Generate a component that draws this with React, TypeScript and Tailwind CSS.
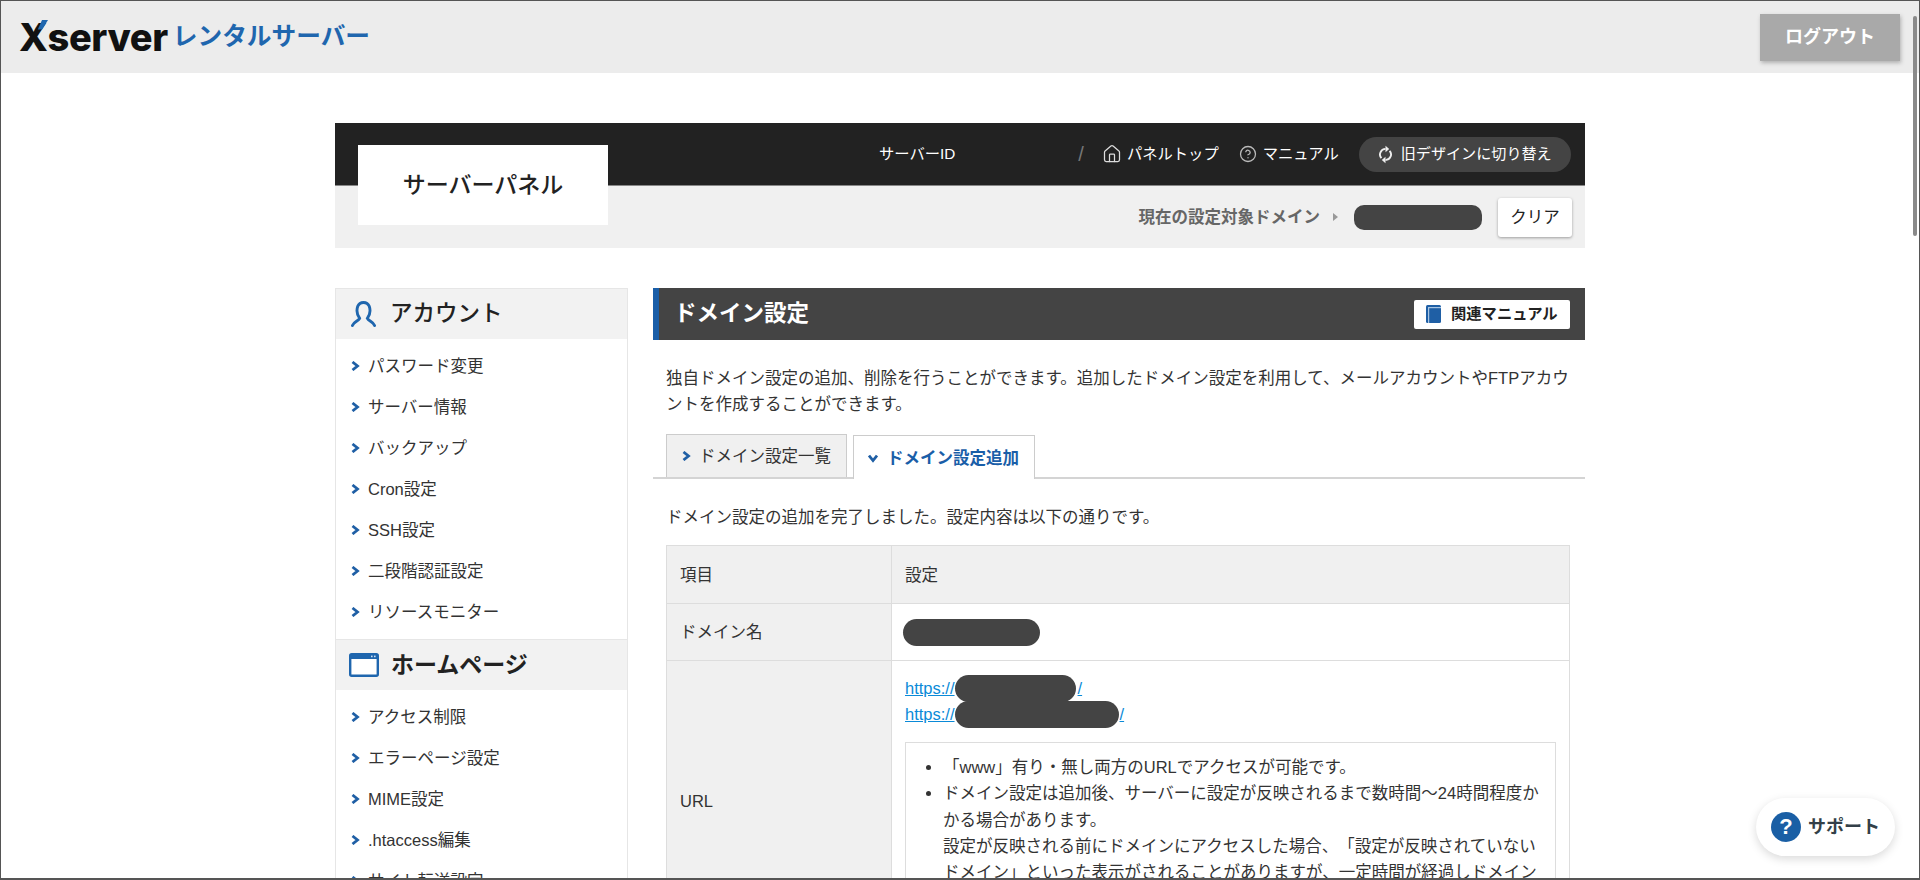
import { CircleHelp, House } from "lucide-react";

const accountMenu = [
  "パスワード変更",
  "サーバー情報",
  "バックアップ",
  "Cron設定",
  "SSH設定",
  "二段階認証設定",
  "リソースモニター",
];

const homepageMenu = [
  "アクセス制限",
  "エラーページ設定",
  "MIME設定",
  ".htaccess編集",
  "サイト転送設定",
];

const Chevron = ({ down = false }: { down?: boolean }) => (
  <svg
    viewBox="0 0 10 10"
    className={down ? "w-[10px] h-[10px] rotate-90 shrink-0" : "w-[10px] h-[10px] shrink-0"}
  >
    <path d="M2.5 1 L7.5 5 L2.5 9" fill="none" stroke="#1f5fa5" strokeWidth="2.8" />
  </svg>
);

const Redact = ({ className }: { className: string }) => (
  <div className={`bg-[#444] ${className}`} />
);

const SideMenu = ({ items, className }: { items: string[]; className: string }) => (
  <ul className={className}>
    {items.map((item) => (
      <li key={item} className="flex items-center h-[41px] pl-[14px] gap-[8px] text-[#333]">
        <Chevron />
        <span>{item}</span>
      </li>
    ))}
  </ul>
);

const App = () => {
  return (
    <div className="relative h-[880px] overflow-hidden bg-white border border-[#555] border-b-2 font-['Liberation_Sans','Noto_Sans_CJK_JP',sans-serif] text-[16.5px] leading-[26px] text-[#333] [text-spacing-trim:space-all]">
      {/* ヘッダー */}
      <header className="flex items-center justify-between h-[72px] bg-[#ececec] pl-[18px] pr-[19px]">
        <div className="flex items-center gap-[5px]">
          <div className="relative font-['Inter',sans-serif] font-extrabold text-[38px] leading-none tracking-[-0.4px] text-[#111]">
            Xserver
            <svg viewBox="0 0 10 10" className="absolute left-[17px] top-[2px] w-[12px] h-[12px]">
              <path d="M5 0 L10 0 L5 8 L1.5 8 Z" fill="#1f66ae" />
            </svg>
          </div>
          <div className="text-[24.7px] leading-none font-bold text-[#1f66ae]">レンタルサーバー</div>
        </div>
        <button className="w-[140px] h-[47px] bg-[#a9a9a9] text-white text-[18px] font-bold shadow-[1px_2px_4px_rgba(0,0,0,0.25)]">
          ログアウト
        </button>
      </header>

      <div className="w-[1250px] ml-[334px] mt-[50px]">
        {/* サーバーパネル */}
        <div className="relative">
          <div className="absolute left-[23px] top-[22px] flex items-center justify-center w-[250px] h-[80px] bg-white text-[23px] font-medium text-[#222]">
            サーバーパネル
          </div>
          <div className="flex items-center h-[63px] bg-[#222] border-b border-[#888] text-[15.3px] text-white">
            <span className="ml-[544px]">サーバーID</span>
            <span className="ml-[123px] text-[#777] text-[20px]">/</span>
            <House className="w-[20px] h-[20px] ml-[18px] text-[#ddd]" strokeWidth={1.5} />
            <span className="ml-[5px]">パネルトップ</span>
            <CircleHelp className="w-[18px] h-[18px] ml-[20px] text-[#bbb]" strokeWidth={1.7} />
            <span className="ml-[6px]">マニュアル</span>
            <div className="flex items-center h-[35px] ml-[20px] pl-[20px] pr-[19px] gap-[9px] rounded-full bg-[#444]">
              <svg viewBox="0 0 14 20" className="w-[13px] h-[19px]">
                <path d="M7 4A6 6 0 0 0 2.6 14" fill="none" stroke="#eee" strokeWidth="2" />
                <path d="M7 0.5 V7.5 L11 4 Z" fill="#eee" />
                <path d="M7 16A6 6 0 0 0 11.4 6" fill="none" stroke="#eee" strokeWidth="2" />
                <path d="M7 19.5 V12.5 L3 16 Z" fill="#eee" />
              </svg>
              <span className="text-[15.1px]">旧デザインに切り替え</span>
            </div>
          </div>
          <div className="flex items-center justify-end h-[62px] bg-[#f0f0f0] pr-[13px]">
            <span className="font-bold text-[#666]">現在の設定対象ドメイン</span>
            <span className="ml-[13px] w-0 h-0 border-y-[4px] border-y-transparent border-l-[5px] border-l-[#999]" />
            <Redact className="w-[128px] h-[25px] ml-[16px] rounded-[10px]" />
            <button className="w-[74px] h-[39px] ml-[16px] bg-white rounded-[3px] text-[#222] shadow-[0_1px_3px_rgba(0,0,0,0.35)]">
              クリア
            </button>
          </div>
        </div>

        <div className="flex gap-[25px] mt-[40px] items-start">
          {/* サイドメニュー */}
          <aside className="w-[293px] shrink-0 border-x border-[#e6e6e6]">
            <div className="flex items-center h-[51px] pl-[15px] gap-[14px] bg-[#f2f2f2] border-t border-[#e6e6e6]">
              <svg viewBox="0 0 26 28" fill="none" className="w-[25px] h-[28px]">
                <path
                  d="M9 18.5C6 14.5 6 9 7 6C8.2 3 10.7 2 13 2C15.3 2 17.8 3 19 6C20 9 20 14.5 17 18.5C18.5 21.5 23 22 24.5 26M9 18.5C7.5 21.5 3 22 1.5 26"
                  stroke="#1f66ae"
                  strokeWidth="3"
                  strokeLinecap="round"
                />
              </svg>
              <span className="text-[22.5px] font-medium text-[#222]">アカウント</span>
            </div>
            <SideMenu items={accountMenu} className="pt-[6px] pb-[7px]" />
            <div className="flex items-center h-[51px] pl-[13px] gap-[12px] bg-[#f2f2f2] border-t border-[#e6e6e6]">
              <svg viewBox="0 0 30 24" className="w-[30px] h-[24px]">
                <rect x="1.2" y="1.2" width="27.6" height="21.6" rx="1.5" fill="#fff" stroke="#1f66ae" strokeWidth="2.4" />
                <rect x="1" y="1" width="28" height="5" fill="#1f66ae" />
                <rect x="22" y="2.6" width="1.6" height="1.6" fill="#cfe0f2" />
                <rect x="25" y="2.6" width="1.6" height="1.6" fill="#cfe0f2" />
              </svg>
              <span className="text-[23px] font-bold text-[#222]">ホームページ</span>
            </div>
            <SideMenu items={homepageMenu} className="pt-[6px]" />
          </aside>

          {/* メイン */}
          <main className="flex-1 min-w-0">
            <div className="flex items-center justify-between h-[52px] bg-[#444] border-l-[6px] border-[#1a5ea8] pl-[15px] pr-[15px]">
              <h1 className="text-[22.5px] font-bold text-white">ドメイン設定</h1>
              <div className="flex items-center h-[29px] w-[156px] pl-[12px] gap-[10px] bg-white rounded-[2px] text-[15.3px] font-bold text-[#222]">
                <svg viewBox="0 0 15 18" className="w-[15px] h-[18px]">
                  <rect x="0" y="0" width="15" height="18" rx="1.5" fill="#1f5fa5" />
                  <rect x="2" y="2" width="13" height="1.2" fill="#a9c6e4" />
                  <rect x="2" y="2" width="1.2" height="16" fill="#a9c6e4" />
                </svg>
                関連マニュアル
              </div>
            </div>

            <p className="mt-[25px] mx-[13px] w-[906px]">
              独自ドメイン設定の追加、削除を行うことができます。追加したドメイン設定を利用して、メールアカウントやFTPアカウントを作成することができます。
            </p>

            <div className="flex items-end mt-[17px] pl-[13px] gap-[6px] h-[45px] border-b-2 border-[#d4d4d4]">
              <div className="flex items-center h-[43px] w-[181px] pl-[14px] gap-[8px] bg-[#f0f0f0] border border-b-0 border-[#ccc]">
                <Chevron />
                <span>ドメイン設定一覧</span>
              </div>
              <div className="relative top-[2px] flex items-center h-[44px] w-[182px] pl-[14px] gap-[9px] bg-white border-x border-t border-[#ccc] font-bold text-[#1a5ea8]">
                <Chevron down />
                <span>ドメイン設定追加</span>
              </div>
            </div>

            <p className="mt-[25px] mx-[13px]">
              ドメイン設定の追加を完了しました。設定内容は以下の通りです。
            </p>

            <div className="mt-[15px] ml-[13px] w-[904px] border border-[#ddd]">
              <div className="grid grid-cols-[225px_1fr] h-[58px] bg-[#f0f0f0] border-b border-[#ddd]">
                <div className="flex items-center pl-[13px] border-r border-[#ddd]">項目</div>
                <div className="flex items-center pl-[13px]">設定</div>
              </div>
              <div className="grid grid-cols-[225px_1fr] h-[57px] border-b border-[#ddd]">
                <div className="flex items-center pl-[13px] bg-[#f0f0f0] border-r border-[#ddd]">ドメイン名</div>
                <div className="flex items-center pl-[11px]">
                  <Redact className="w-[137px] h-[27px] rounded-full" />
                </div>
              </div>
              <div className="grid grid-cols-[225px_1fr] grid-rows-[280px] h-[280px] overflow-hidden">
                <div className="flex items-center pl-[13px] bg-[#f0f0f0] border-r border-[#ddd]">URL</div>
                <div className="pt-[14px] pl-[13px] pr-[13px]">
                  <div className="relative h-[52px] text-[#0a8ad8] underline">
                    <div>https://<span className="inline-block w-[123px]" />/</div>
                    <div>https://<span className="inline-block w-[165px]" />/</div>
                    <Redact className="absolute left-[50px] top-[0px] w-[121px] h-[27px] rounded-full" />
                    <Redact className="absolute left-[50px] top-[26px] w-[164px] h-[27px] rounded-full" />
                  </div>
                  <div className="mt-[15px] h-[300px] border border-[#ddd] pt-[11px] pl-[25px] pr-[10px] leading-[26.3px]">
                    <ul className="list-disc pl-[12px]">
                      <li>「www」有り・無し両方のURLでアクセスが可能です。</li>
                      <li>
                        ドメイン設定は追加後、サーバーに設定が反映されるまで数時間～24時間程度かかる場合があります。
                        <br />
                        設定が反映される前にドメインにアクセスした場合、「設定が反映されていないドメイン」といった表示がされることがありますが、一定時間が経過しドメイン
                      </li>
                    </ul>
                  </div>
                </div>
              </div>
            </div>
          </main>
        </div>
      </div>

      {/* サポート */}
      <div className="absolute right-[24px] bottom-[22px] flex items-center h-[58px] w-[139px] pl-[15px] gap-[7px] rounded-full bg-white shadow-[0_3px_10px_rgba(0,0,0,0.15)]">
        <span className="flex items-center justify-center w-[30px] h-[30px] rounded-full bg-[#1a5fa5] text-white text-[22px] font-bold">
          ?
        </span>
        <span className="text-[18px] font-bold text-[#333f48]">サポート</span>
      </div>

      {/* スクロールバー */}
      <div className="absolute right-[2px] top-[15px] w-[4px] h-[220px] rounded-full bg-[#8a8a8a]" />
    </div>
  );
};

export default App;
